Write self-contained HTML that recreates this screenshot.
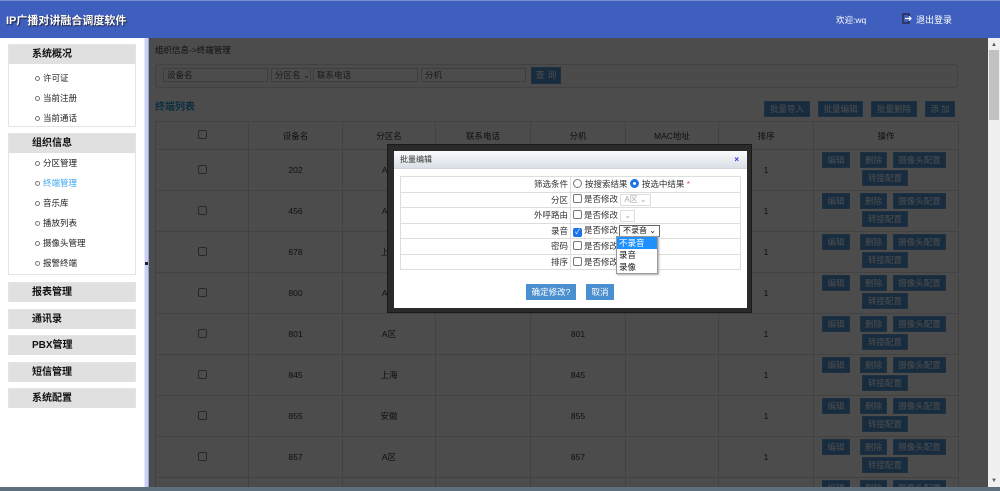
<!DOCTYPE html>
<html><head><meta charset="utf-8"><style>
*{box-sizing:border-box;margin:0;padding:0}
html,body{width:1000px;height:491px;overflow:hidden}
body{position:relative;font-family:"Liberation Sans","Noto Sans CJK SC",sans-serif;font-size:9px;color:#333;background:#fff}
.a{position:absolute}
.hdr{left:0;top:0;width:1000px;height:38px;background:#3e5fbd;border-top:1px solid #7b8fd0}
.sb{left:0;top:38px;width:144px;height:449px;background:#fff}
.box{position:absolute;left:8px;width:128px;border:1px solid #e4e4e4;background:#fff}
.bh{height:19px;background:#e0e0e0;font-weight:bold;font-size:10px;line-height:19px;padding-left:23px;color:#111}
.it{height:20px;line-height:20px;padding-left:34px;position:relative;color:#222;font-size:8.5px}
.it:before{content:"";position:absolute;left:26px;top:8px;width:3px;height:3px;border:1px solid #777;border-radius:50%}
.clip{left:149px;top:38px;width:839px;height:449px;overflow:hidden;background:#fff}
.inp{position:absolute;height:14px;top:30px;background:#fff;border:1px solid #ccc;color:#555;font-size:8.5px;line-height:12px;padding-left:3px}
.db{position:absolute;background:#5294d4;border:1px solid #6aa3da;color:#fff;font-size:8.5px;text-align:center;line-height:14px;height:16px}
table.t{position:absolute;left:6px;top:83px;border-collapse:collapse;font-size:8.5px}
.t td{border:1px solid #ddd;text-align:center;height:41px;vertical-align:middle;color:#333;background:#fff}
.t tr.h td{height:28px}
.cb{display:inline-block;width:9px;height:9px;border:1px solid #888;border-radius:2px}
.ov{left:149px;top:38px;width:839px;height:449px;background:rgba(0,0,0,0.7)}
.dlg{left:387px;top:144px;width:365px;height:169px;background:#2a2a2a;border:1px solid #1a1a1a}
.dw{position:absolute;left:6px;top:6px;width:353px;height:157px;background:#fff}
.dt{height:18px;background:linear-gradient(#fafbfd,#d9dfe6);border-bottom:1px solid #cfd6de;font-size:8px;line-height:18px;padding-left:6px;color:#333}
table.f{position:absolute;left:6px;top:25px;width:341px;border-collapse:collapse;font-size:8.5px}
.f td{border:1px solid #ddd;height:15.5px;padding:0 2px;color:#333}
.f td.l{width:170px;text-align:right}
.ck{display:inline-block;width:9px;height:9px;border:1px solid #777;border-radius:2px;vertical-align:-1px;margin-right:2px}
.rd{display:inline-block;width:9px;height:9px;border:1px solid #777;border-radius:50%;vertical-align:-1px;margin-right:3px}
.sel{display:inline-block;height:12px;border:1px solid #ddd;color:#aaa;font-size:8px;line-height:10px;padding:0 3px;vertical-align:middle}
</style></head><body>
<div class="a hdr"><div class="a" style="left:6px;top:11px;color:#fff;font-size:11px;font-weight:bold;text-shadow:1px 1px 1px #223">IP广播对讲融合调度软件</div>
<div class="a" style="left:836px;top:13px;color:#fff;font-size:8.5px">欢迎:wq</div>
<svg class="a" style="left:902px;top:12px" width="11" height="11" viewBox="0 0 11 11"><path d="M1 1h6v2M1 1v9h6V8" fill="none" stroke="#223" stroke-width="1.2"/><path d="M3 5.5h6M7 3.5l2 2-2 2" fill="none" stroke="#fff" stroke-width="1.2"/></svg>
<div class="a" style="left:916px;top:12px;color:#fff;font-size:9px">退出登录</div></div>
<div class="a sb">
<div class="box" style="top:6px;height:83px"><div class="bh">系统概况</div><div style="height:4px"></div><div class="it">许可证</div><div class="it">当前注册</div><div class="it">当前通话</div></div>
<div class="box" style="top:95px;height:142px"><div class="bh">组织信息</div><div class="it">分区管理</div><div class="it" style="color:#3aa6f0">终端管理</div><div class="it">音乐库</div><div class="it">播放列表</div><div class="it">摄像头管理</div><div class="it">报警终端</div></div>
<div class="box" style="top:244px;height:20px"><div class="bh">报表管理</div></div>
<div class="box" style="top:271px;height:20px"><div class="bh">通讯录</div></div>
<div class="box" style="top:297px;height:20px"><div class="bh">PBX管理</div></div>
<div class="box" style="top:324px;height:20px"><div class="bh">短信管理</div></div>
<div class="box" style="top:350px;height:20px"><div class="bh">系统配置</div></div>
</div>
<div class="a" style="left:144px;top:38px;width:5px;height:449px;background:#c9d0f2;border-left:1px solid #e5e8fa;border-right:1px solid #8f9fd8"></div>
<div class="a" style="left:145px;top:262px;width:3px;height:3px;background:#222"></div>
<div class="a clip">
<div class="a" style="left:6px;top:6px;color:#333;font-size:8.5px">组织信息->终端管理</div>
<div class="a" style="left:6px;top:26px;width:803px;height:24px;border:1px solid #ddd;border-radius:3px;background:#fafafa"></div>
<div class="inp" style="left:14px;width:105px">设备名</div>
<div class="inp" style="left:122px;width:40px">分区名 ⌄</div>
<div class="inp" style="left:164px;width:105px">联系电话</div>
<div class="inp" style="left:272px;width:105px">分机</div>
<div class="db" style="left:382px;top:29px;width:30px;height:17px;line-height:15px;font-size:9px">查 询</div>
<div class="a" style="left:6px;top:60px;color:#2a9ad8;font-size:10px;font-weight:bold">终端列表</div>
<div class="db" style="left:615px;top:63px;width:46px">批量导入</div>
<div class="db" style="left:669px;top:63px;width:45px">批量编辑</div>
<div class="db" style="left:722px;top:63px;width:46px">批量删除</div>
<div class="db" style="left:776px;top:63px;width:30px">添 加</div>
<table class="t">
<tr class="h"><td style="width:93px"><span class="cb"></span></td><td style="width:94px">设备名</td><td style="width:93px">分区名</td><td style="width:95px">联系电话</td><td style="width:95px">分机</td><td style="width:93px">MAC地址</td><td style="width:95px">排序</td><td style="width:145px">操作</td></tr>
<tr><td><span class="cb"></span></td><td>202</td><td>A区</td><td></td><td>202</td><td></td><td>1</td><td></td></tr>
<tr><td><span class="cb"></span></td><td>456</td><td>A区</td><td></td><td>456</td><td></td><td>1</td><td></td></tr>
<tr><td><span class="cb"></span></td><td>678</td><td>上海</td><td></td><td>678</td><td></td><td>1</td><td></td></tr>
<tr><td><span class="cb"></span></td><td>800</td><td>A区</td><td></td><td>800</td><td></td><td>1</td><td></td></tr>
<tr><td><span class="cb"></span></td><td>801</td><td>A区</td><td></td><td>801</td><td></td><td>1</td><td></td></tr>
<tr><td><span class="cb"></span></td><td>845</td><td>上海</td><td></td><td>845</td><td></td><td>1</td><td></td></tr>
<tr><td><span class="cb"></span></td><td>855</td><td>安徽</td><td></td><td>855</td><td></td><td>1</td><td></td></tr>
<tr><td><span class="cb"></span></td><td>857</td><td>A区</td><td></td><td>857</td><td></td><td>1</td><td></td></tr>
<tr><td><span class="cb"></span></td><td></td><td></td><td></td><td></td><td></td><td></td><td></td></tr>
</table>
<div id="ops"></div>
</div>
<div class="a ov"></div>
<script>
var h='';for(var i=0;i<9;i++){var y=114+41*i;h+='<div class="db" style="left:673px;top:'+y+'px;width:28px">编辑</div><div class="db" style="left:711px;top:'+y+'px;width:27px">删除</div><div class="db" style="left:744px;top:'+y+'px;width:53px">摄像头配置</div><div class="db" style="left:713px;top:'+(y+18)+'px;width:46px">转接配置</div>';}
document.getElementById('ops').innerHTML=h;
</script>
<div class="a dlg"><div class="dw">
<div class="dt">批量编辑<span style="position:absolute;right:8px;top:0;color:#33c;font-weight:bold">×</span></div>
<table class="f">
<tr><td class="l">筛选条件</td><td><span class="rd"></span>按搜索结果 <span class="rd" style="border:3px solid #1a73e8"></span>按选中结果 <span style="color:#e55">*</span></td></tr>
<tr><td class="l">分区</td><td><span class="ck"></span>是否修改 <span class="sel">A区 ⌄</span></td></tr>
<tr><td class="l">外呼路由</td><td><span class="ck"></span>是否修改 <span class="sel">⌄</span></td></tr>
<tr><td class="l">录音</td><td><span class="ck" style="background:#1a73e8;border-color:#1a73e8;color:#fff;font-size:7px;line-height:7px;text-align:center">✓</span>是否修改<span class="sel" style="color:#111;border-color:#666;margin-left:1px">不录音 ⌄</span></td></tr>
<tr><td class="l">密码</td><td><span class="ck"></span>是否修改</td></tr>
<tr><td class="l">排序</td><td><span class="ck"></span>是否修改</td></tr>
</table>
<div class="a" style="left:222px;top:85px;width:42px;height:38px;border:1px solid #999;background:#fff;box-shadow:1px 1px 2px #aaa;font-size:8.5px;line-height:12px;color:#222">
<div style="background:#1e90ff;color:#fff;padding-left:2px">不录音</div><div style="padding-left:2px">录音</div><div style="padding-left:2px">录像</div></div>
<div class="a" style="left:132px;top:133px;width:50px;height:16px;background:#4a8fd0;color:#fff;font-size:8.5px;line-height:16px;text-align:center">确定修改?</div>
<div class="a" style="left:192px;top:133px;width:28px;height:16px;background:#4a8fd0;color:#fff;font-size:8.5px;line-height:16px;text-align:center">取消</div>
</div></div>
<div class="a" style="left:988px;top:38px;width:12px;height:449px;background:#f0f0f0"><div class="a" style="left:1px;top:12px;width:10px;height:70px;background:#c2c2c2"></div><div class="a" style="left:3px;top:4px;font-size:6px;color:#555">▲</div><div class="a" style="left:3px;top:440px;font-size:6px;color:#555">▼</div></div>
<div class="a" style="left:0;top:487px;width:1000px;height:4px;background:#5e6e7a"></div>
</body></html>
